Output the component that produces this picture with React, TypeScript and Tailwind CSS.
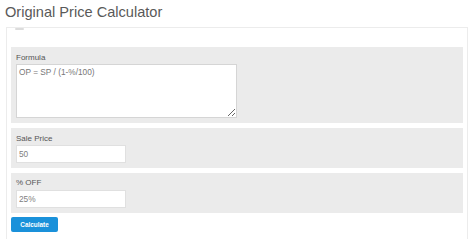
export default function App() {
  return (
    <div className="w-[474px] h-[239px] bg-white overflow-hidden font-['Liberation_Sans',Arial,sans-serif]">
      <h1 className="pl-[5px] pt-[2px] text-[14.6px] leading-[20px] text-[#595959]">
        Original Price Calculator
      </h1>
      <div className="ml-[6px] mt-[5px] w-[462px] h-[220px] border border-[#ececec] border-b-0 pl-[4px] pr-[4px] flex flex-col">
        <div className="ml-[4px] w-[9px] h-[2px] rounded-full bg-[#dcdcdc]" />
        <div className="mt-[17px] flex flex-col gap-[5px]">
          <div className="bg-[#ebebeb] h-[76px] px-[5px] pt-[5px]">
            <div className="text-[8px] leading-[11px] text-[#555]">Formula</div>
            <textarea
              readOnly
              defaultValue="OP = SP / (1-%/100)"
              className="mt-[1px] block w-[221px] h-[54px] bg-white border border-[#d5d5d5] px-[2px] py-[2px] text-[8.3px] leading-[11px] text-[#777] resize-y outline-none font-['Liberation_Sans',Arial,sans-serif]"
            />
          </div>
          <div className="bg-[#ebebeb] h-[40px] px-[5px] pt-[5px]">
            <div className="text-[8px] leading-[11px] text-[#555]">Sale Price</div>
            <input
              readOnly
              defaultValue="50"
              className="mt-[1px] block w-[110px] h-[18px] bg-white border border-[#e0e0e0] px-[2px] text-[8.3px] text-[#808080] outline-none font-['Liberation_Sans',Arial,sans-serif]"
            />
          </div>
          <div className="bg-[#ebebeb] h-[40px] px-[5px] pt-[4px]">
            <div className="text-[8px] leading-[11px] text-[#555]">% OFF</div>
            <input
              readOnly
              defaultValue="25%"
              className="mt-[2px] block w-[110px] h-[18px] bg-white border border-[#e0e0e0] px-[2px] text-[8.3px] text-[#808080] outline-none font-['Liberation_Sans',Arial,sans-serif]"
            />
          </div>
        </div>
        <button className="mt-[4px] w-[47px] h-[15px] rounded-[2px] bg-[#1a91da] text-white text-[6.4px] font-bold leading-[15px] text-center">
          Calculate
        </button>
      </div>
    </div>
  );
}
